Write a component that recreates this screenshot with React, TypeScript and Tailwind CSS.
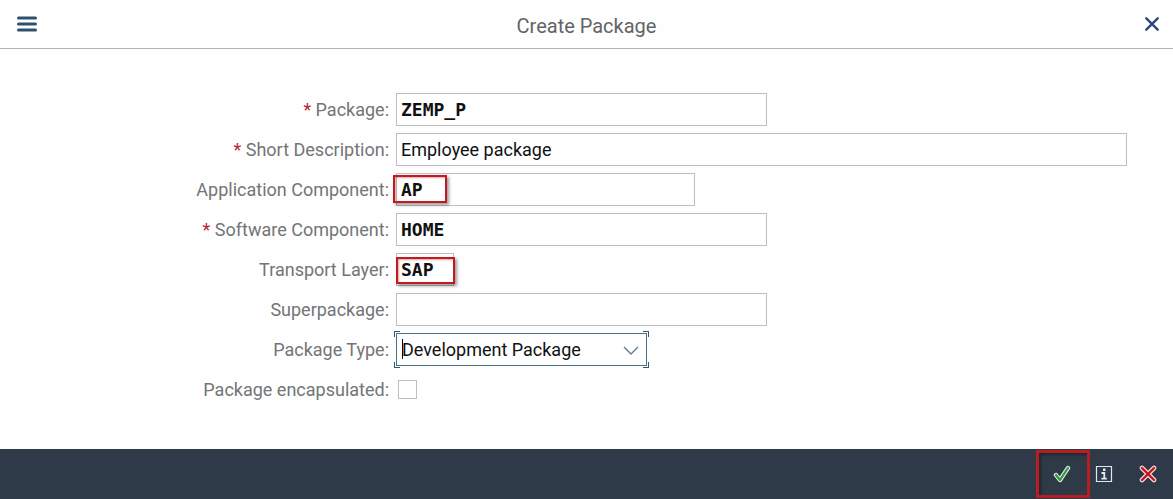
import type { ReactNode } from "react";

interface RowProps {
  id: string;
  label: string;
  required?: boolean;
  children: ReactNode;
}

function Row({ id, label, required, children }: RowProps) {
  return (
    <div className="grid grid-cols-[389px_1fr] items-center gap-x-[7px] min-h-[33px]">
      <label htmlFor={id} className="text-right text-[18px] leading-6 text-[#737577] whitespace-nowrap">
        {required && <span className="text-[#b4233c]">* </span>}
        {label}:
      </label>
      <div className="relative flex items-center">{children}</div>
    </div>
  );
}

interface FieldProps {
  id: string;
  value?: string;
  width: string;
  mono?: boolean;
}

function Field({ id, value = "", width, mono }: FieldProps) {
  return (
    <input
      id={id}
      type="text"
      defaultValue={value}
      className={`h-[33px] border border-[#bfbfbf] bg-white px-1 text-[18px] text-[#111] outline-none ${width} ${
        mono ? "font-['DejaVu_Sans_Mono',monospace] font-bold" : ""
      }`}
    />
  );
}

function Marker({ className }: { className: string }) {
  return (
    <span
      className={`pointer-events-none absolute border-[2px] border-[#c4191f] shadow-[2px_2px_3px_rgba(0,0,0,0.4),inset_1px_1px_2px_rgba(150,0,0,0.35)] ${className}`}
    />
  );
}

export default function App() {
  return (
    <div className="flex min-h-screen flex-col bg-[#fefefe] font-[Roboto,sans-serif]">
      <header className="grid h-[49px] grid-cols-[1fr_auto_1fr] items-center border-b border-[#b5b5b5] px-[5px]">
        <button type="button" aria-label="Menu" className="ml-[6px] flex h-8 w-8 items-center justify-center">
          <svg width="22" height="18" viewBox="0 0 22 18" fill="none" stroke="#2d5270" strokeWidth="3" strokeLinecap="round">
            <path d="M2.5 3h17M2.5 9h17M2.5 15h17" />
          </svg>
        </button>
        <h1 className="pt-1 text-[20px] leading-6 text-[#626466]">Create Package</h1>
        <button type="button" aria-label="Close" className="flex h-8 w-8 items-center justify-center justify-self-end">
          <svg width="16" height="16" viewBox="0 0 16 16" fill="none" stroke="#2c4c74" strokeWidth="2.4" strokeLinecap="round">
            <path d="M2.3 2.3l11.4 11.4M13.7 2.3L2.3 13.7" />
          </svg>
        </button>
      </header>

      <main className="flex flex-1 flex-col gap-[7px] pt-11 pr-[46px] pb-10">
        <Row id="package" label="Package" required>
          <Field id="package" value="ZEMP_P" width="w-[371px]" mono />
        </Row>
        <Row id="description" label="Short Description" required>
          <Field id="description" value="Employee package" width="w-full" />
        </Row>
        <Row id="application" label="Application Component">
          <Field id="application" value="AP" width="w-[299px]" mono />
          <Marker className="-left-[3px] top-[2px] h-[28px] w-[54px]" />
        </Row>
        <Row id="software" label="Software Component" required>
          <Field id="software" value="HOME" width="w-[371px]" mono />
        </Row>
        <Row id="transport" label="Transport Layer">
          <Field id="transport" value="SAP" width="w-[58px]" mono />
          <Marker className="left-0 top-[4px] h-[27px] w-[59px]" />
        </Row>
        <Row id="superpackage" label="Superpackage">
          <Field id="superpackage" width="w-[371px]" />
        </Row>
        <Row id="type" label="Package Type">
          <div className="relative">
            <select
              id="type"
              className="block h-[33px] w-[251px] appearance-none border border-[#4a7386] bg-white pl-[5px] text-[18px] text-[#111] outline-none"
            >
              <option>Development Package</option>
            </select>
            <span className="pointer-events-none absolute left-[6px] top-[6px] h-[20px] w-px bg-black" />
            <svg className="pointer-events-none absolute right-2 top-[13px]" width="16" height="9" viewBox="0 0 16 9" fill="none" stroke="#5c7f8c" strokeWidth="1.4">
              <path d="M1 1l7 7 7-7" />
            </svg>
            <span className="absolute -left-[2px] -top-[2px] h-[6px] w-[6px] border-l border-t border-[#2f5a70]" />
            <span className="absolute -right-[2px] -top-[2px] h-[6px] w-[6px] border-r border-t border-[#2f5a70]" />
            <span className="absolute -bottom-[2px] -left-[2px] h-[6px] w-[6px] border-b border-l border-[#2f5a70]" />
            <span className="absolute -bottom-[2px] -right-[2px] h-[6px] w-[6px] border-b border-r border-[#2f5a70]" />
          </div>
        </Row>
        <Row id="encapsulated" label="Package encapsulated">
          <input id="encapsulated" type="checkbox" className="ml-[2px] h-[19px] w-[19px] appearance-none border border-[#bfbfbf] bg-white" />
        </Row>
      </main>

      <footer className="flex h-[50px] items-center justify-end bg-[#2e3a47] pr-4">
        <button
          type="button"
          aria-label="Continue"
          className="mr-[5px] flex h-[48px] w-[54px] items-center justify-center border-[3px] border-[#b81d22] pr-[3px] shadow-[inset_2px_2px_3px_rgba(0,0,0,0.35)]"
        >
          <svg width="18" height="18" viewBox="0 0 18 18" fill="none" strokeLinecap="round" strokeLinejoin="round">
            <path d="M3 10l4 5L15 3" stroke="#dcefd9" strokeWidth="4.4" />
            <path d="M3 10l4 5L15 3" stroke="#2f9440" strokeWidth="2.2" />
          </svg>
        </button>
        <button type="button" aria-label="Information" className="mr-[26px] flex h-8 w-[18px] items-center justify-center">
          <svg width="18" height="18" viewBox="0 0 18 18" fill="none" stroke="#dfe8f0">
            <path d="M1.5 1.5h15v15h-15z" strokeWidth="1.2" />
            <path d="M8 3.5h2.5v2.5H8z" fill="#dfe8f0" stroke="none" />
            <path d="M6.5 8H9.3v5.5M6.3 13.7h5.6" strokeWidth="1.8" />
          </svg>
        </button>
        <button type="button" aria-label="Cancel" className="flex h-8 w-[18px] items-center justify-center">
          <svg width="18" height="18" viewBox="0 0 18 18" fill="none" strokeLinecap="round">
            <path d="M3 3l12 12M15 3L3 15" stroke="#f3d8da" strokeWidth="4.6" />
            <path d="M3 3l12 12M15 3L3 15" stroke="#c4121d" strokeWidth="2.4" />
          </svg>
        </button>
      </footer>
    </div>
  );
}
